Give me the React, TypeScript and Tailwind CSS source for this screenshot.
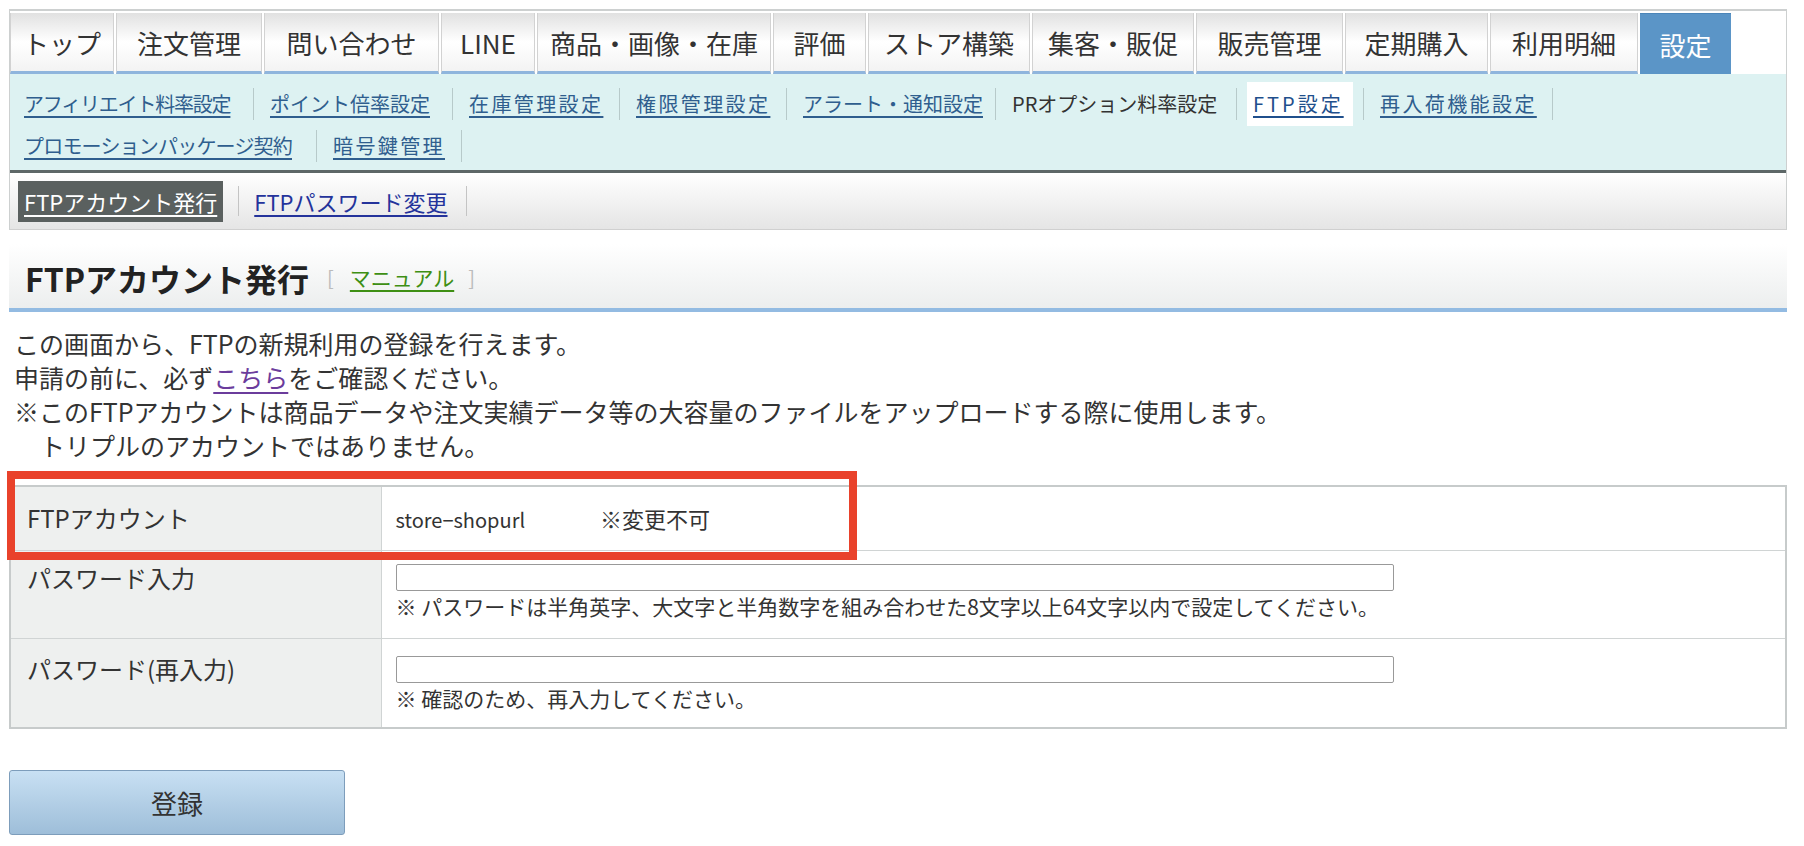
import React from 'react';

const tabs = [
  { label: 'トップ', w: 'w-[104px]' },
  { label: '注文管理', w: 'w-[146px]' },
  { label: '問い合わせ', w: 'w-[175px]' },
  { label: 'LINE', w: 'w-[94px]' },
  { label: '商品・画像・在庫', w: 'w-[234px]' },
  { label: '評価', w: 'w-[93px]' },
  { label: 'ストア構築', w: 'w-[162px]' },
  { label: '集客・販促', w: 'w-[162px]' },
  { label: '販売管理', w: 'w-[147px]' },
  { label: '定期購入', w: 'w-[143px]' },
  { label: '利用明細', w: 'w-[148px]' },
  { label: '設定', w: 'w-[91px]', active: true },
];

// widths taken from the reference so the separators line up
const subItems = [
  { label: 'アフィリエイト料率設定', w: 'w-[213px] tracking-[-1.2px]' },
  { label: 'ポイント倍率設定', w: 'w-[166px]' },
  { label: '在庫管理設定', w: 'w-[134px] tracking-[2.4px]' },
  { label: '権限管理設定', w: 'w-[134px] tracking-[2.4px]' },
  { label: 'アラート・通知設定', w: 'w-[176px]' },
  { label: 'PRオプション料率設定', w: 'w-[208px]', plain: true },
  { label: 'FTP設定', w: 'w-[94px] tracking-[3px]', current: true },
  { label: '再入荷機能設定', w: 'w-[156px] tracking-[2.4px]' },
  { label: 'プロモーションパッケージ契約', w: 'w-[276px] tracking-[-0.8px]' },
  { label: '暗号鍵管理', w: 'w-[112px] tracking-[2.4px]' },
];

function TabBar() {
  return (
    <div className="flex h-[63px] gap-[2px] pt-[2px]">
      {tabs.map((t) =>
        t.active ? (
          <div
            key={t.label}
            className={`${t.w} flex items-center justify-center bg-[#5b95c7] border-t border-[#4c86b9] text-[26px] text-white`}
          >
            {t.label}
          </div>
        ) : (
          <div
            key={t.label}
            className={`${t.w} flex items-center justify-center border-x border-[#d2d2d2] border-b-[3px] border-b-[#8fb5dd] bg-gradient-to-b from-[#e1e1e1] via-white to-[#f3f3f3] text-[26px] text-[#333]`}
          >
            {t.label}
          </div>
        )
      )}
    </div>
  );
}

function SubNav() {
  return (
    <div className="flex flex-wrap bg-[#ddf2f2] pt-[9px] pb-[3px] pl-[14px] text-[20px]">
      {subItems.map((s, i) => (
        <div key={s.label} className="flex h-[42px] items-center">
          <div className={`flex h-full items-center ${i === 0 || i === 8 ? 'pr-[16px]' : 'px-[16px]'}`}>
            {s.plain ? (
              <span className={`${s.w} whitespace-nowrap text-[#333]`}>{s.label}</span>
            ) : s.current ? (
              <span className="-mx-[6px] flex h-[44px] items-center bg-white px-[6px]">
                <span className={`${s.w} whitespace-nowrap text-[#1f4f8c] underline underline-offset-[4px]`}>{s.label}</span>
              </span>
            ) : (
              <span className={`${s.w} whitespace-nowrap text-[#2f5e8e] underline underline-offset-[4px]`}>{s.label}</span>
            )}
          </div>
          <span className="h-[32px] w-px bg-[#b7caca]" />
        </div>
      ))}
    </div>
  );
}

function ThirdNav() {
  return (
    <div className="flex h-[60px] items-center border-t-[3px] border-b border-t-[#5d6767] border-b-[#d0d0d0] bg-gradient-to-b from-white to-[#e5e5e5] pl-[8px] text-[22px]">
      <span className="flex h-[41px] items-center bg-[#5a605f] px-[6px] text-white underline underline-offset-[4px]">
        FTPアカウント発行
      </span>
      <span className="mx-[15px] h-[30px] w-px bg-[#c4c4c4]" />
      <span className="text-[#24339b] underline underline-offset-[4px]">FTPパスワード変更</span>
      <span className="ml-[18px] h-[30px] w-px bg-[#c4c4c4]" />
    </div>
  );
}

export default function App() {
  return (
    <div className="min-h-[846px] bg-white pt-[9px] pl-[9px] pr-[17px] font-['Noto_Sans_CJK_JP',sans-serif] text-[#333]">
      <div className="border-x border-t-2 border-[#cdd0d0]">
        <TabBar />
        <SubNav />
        <ThirdNav />
      </div>

      {/* page title */}
      <div className="mt-[14px] flex h-[68px] items-center border-b-4 border-[#93bbe2] bg-gradient-to-b from-white to-[#eceeee] pl-[16px] pt-[4px]">
        <h1 className="text-[32px] font-bold leading-none text-[#222]">FTPアカウント発行</h1>
        <span className="ml-[18px] text-[20px] text-[#bbb]">[</span>
        <span className="ml-[16px] text-[21px] text-[#3e8f14] underline underline-offset-[4px]">マニュアル</span>
        <span className="ml-[14px] text-[20px] text-[#bbb]">]</span>
      </div>

      <div className="mt-[14px] pl-[5px] text-[25px] leading-[34px] text-[#333]">
        <p>この画面から、FTPの新規利用の登録を行えます。</p>
        <p>
          申請の前に、必ず<span className="text-[#6b3c9c] underline underline-offset-[4px]">こちら</span>をご確認ください。
        </p>
        <p>※このFTPアカウントは商品データや注文実績データ等の大容量のファイルをアップロードする際に使用します。</p>
        <p className="pl-[26px]">トリプルのアカウントではありません。</p>
      </div>

      <div className="relative mt-[23px]">
        <table className="w-full border-collapse border-2 border-[#c7cbcb]">
          <tbody>
            <tr className="h-[64px]">
              <th className="w-[371px] border border-[#d0d4d4] bg-[#eef0ef] pl-[16px] text-left text-[24px] font-normal">
                FTPアカウント
              </th>
              <td className="border border-[#d0d4d4] pl-[14px]">
                <span className="text-[20px]">store−shopurl</span>
                <span className="ml-[75px] text-[22px]">※変更不可</span>
              </td>
            </tr>
            <tr className="h-[88px]">
              <th className="border border-[#d0d4d4] bg-[#eef0ef] pl-[16px] pt-[9px] text-left align-top text-[24px] font-normal">
                パスワード入力
              </th>
              <td className="border border-[#d0d4d4] pl-[14px] pt-[13px] align-top">
                <input type="password" className="block h-[27px] w-[998px] rounded-[2px] border border-[#999] bg-white" />
                <p className="mt-[1px] text-[21px] leading-[28px]">
                  ※ パスワードは半角英字、大文字と半角数字を組み合わせた8文字以上64文字以内で設定してください。
                </p>
              </td>
            </tr>
            <tr className="h-[90px]">
              <th className="border border-[#d0d4d4] bg-[#eef0ef] pl-[16px] pt-[12px] text-left align-top text-[24px] font-normal">
                パスワード(再入力)
              </th>
              <td className="border border-[#d0d4d4] pl-[14px] pt-[17px] align-top">
                <input type="password" className="block h-[27px] w-[998px] rounded-[2px] border border-[#999] bg-white" />
                <p className="mt-[1px] text-[21px] leading-[28px]">※ 確認のため、再入力してください。</p>
              </td>
            </tr>
          </tbody>
        </table>
        {/* annotation frame */}
        <div className="pointer-events-none absolute left-[-2px] top-[-14px] h-[89px] w-[850px] border-[8px] border-[#e9422b]" />
      </div>

      <button className="mt-[41px] h-[65px] w-[336px] rounded-[3px] border border-[#7d9dbb] bg-gradient-to-b from-[#c8e0f3] to-[#9ebed9] text-[26px] text-[#333]">
        登録
      </button>
    </div>
  );
}
